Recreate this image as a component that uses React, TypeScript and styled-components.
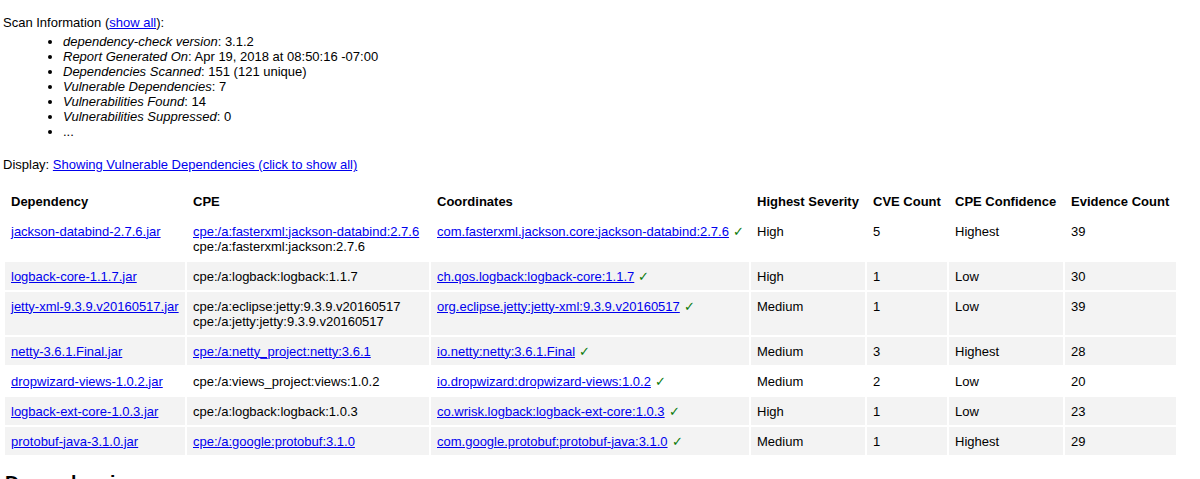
import React from "react";
import styled, { createGlobalStyle } from "styled-components";

const GlobalStyle = createGlobalStyle`
  html, body { margin: 0; padding: 0; background: #fff; }
  body {
    padding: 15px 3px 0 3px;
    font-family: "Liberation Sans", Arial, Helvetica, sans-serif;
    font-size: 13px;
    color: #000;
    overflow: hidden;
  }
`;

const Link = styled.a`
  color: #0000ee;
  text-decoration: underline;
  cursor: pointer;
`;

const Section = styled.div`
  line-height: 15px;
`;

const InfoList = styled.ul`
  margin: 4px 0 0 0;
  padding-left: 60px;
  list-style: disc;
`;

const InfoItem = styled.li`
  line-height: 15px;
`;

const Label = styled.em`
  font-style: italic;
`;

const DisplayLine = styled.div`
  margin-top: 18px;
  line-height: 15px;
`;

const Table = styled.table`
  margin-top: 13px;
  width: 1175px;
  border-spacing: 2px;
  table-layout: fixed;
`;

const Th = styled.th<{ $w: number }>`
  box-sizing: border-box;
  width: ${(p) => p.$w}px;
  padding: 6.5px 6px;
  text-align: left;
  font-weight: bold;
  line-height: 15px;
  vertical-align: top;
  white-space: nowrap;
`;

const Tr = styled.tr<{ $shade: boolean }>`
  background: ${(p) => (p.$shade ? "#f3f3f3" : "transparent")};
`;

const Td = styled.td`
  padding: 6.5px 6px;
  line-height: 15px;
  vertical-align: top;
  white-space: nowrap;
`;

const Check = styled.span`
  color: #0b7a0b;
  margin-left: 4px;
`;

const Heading = styled.h2`
  margin: 15px 0 0 2px;
  font-size: 19.5px;
  font-weight: bold;
`;

type Row = {
  dep: string;
  cpes: { text: string; link: boolean }[];
  coord: string;
  sev: string;
  cve: number;
  conf: string;
  ev: number;
  shade: boolean;
};

const rows: Row[] = [
  {
    dep: "jackson-databind-2.7.6.jar",
    cpes: [
      { text: "cpe:/a:fasterxml:jackson-databind:2.7.6", link: true },
      { text: "cpe:/a:fasterxml:jackson:2.7.6", link: false },
    ],
    coord: "com.fasterxml.jackson.core:jackson-databind:2.7.6",
    sev: "High",
    cve: 5,
    conf: "Highest",
    ev: 39,
    shade: false,
  },
  {
    dep: "logback-core-1.1.7.jar",
    cpes: [{ text: "cpe:/a:logback:logback:1.1.7", link: false }],
    coord: "ch.qos.logback:logback-core:1.1.7",
    sev: "High",
    cve: 1,
    conf: "Low",
    ev: 30,
    shade: true,
  },
  {
    dep: "jetty-xml-9.3.9.v20160517.jar",
    cpes: [
      { text: "cpe:/a:eclipse:jetty:9.3.9.v20160517", link: false },
      { text: "cpe:/a:jetty:jetty:9.3.9.v20160517", link: false },
    ],
    coord: "org.eclipse.jetty:jetty-xml:9.3.9.v20160517",
    sev: "Medium",
    cve: 1,
    conf: "Low",
    ev: 39,
    shade: true,
  },
  {
    dep: "netty-3.6.1.Final.jar",
    cpes: [{ text: "cpe:/a:netty_project:netty:3.6.1", link: true }],
    coord: "io.netty:netty:3.6.1.Final",
    sev: "Medium",
    cve: 3,
    conf: "Highest",
    ev: 28,
    shade: true,
  },
  {
    dep: "dropwizard-views-1.0.2.jar",
    cpes: [{ text: "cpe:/a:views_project:views:1.0.2", link: false }],
    coord: "io.dropwizard:dropwizard-views:1.0.2",
    sev: "Medium",
    cve: 2,
    conf: "Low",
    ev: 20,
    shade: false,
  },
  {
    dep: "logback-ext-core-1.0.3.jar",
    cpes: [{ text: "cpe:/a:logback:logback:1.0.3", link: false }],
    coord: "co.wrisk.logback:logback-ext-core:1.0.3",
    sev: "High",
    cve: 1,
    conf: "Low",
    ev: 23,
    shade: true,
  },
  {
    dep: "protobuf-java-3.1.0.jar",
    cpes: [{ text: "cpe:/a:google:protobuf:3.1.0", link: true }],
    coord: "com.google.protobuf:protobuf-java:3.1.0",
    sev: "Medium",
    cve: 1,
    conf: "Highest",
    ev: 29,
    shade: true,
  },
];

const columns: { label: string; w: number }[] = [
  { label: "Dependency", w: 180 },
  { label: "CPE", w: 242 },
  { label: "Coordinates", w: 318 },
  { label: "Highest Severity", w: 114 },
  { label: "CVE Count", w: 80 },
  { label: "CPE Confidence", w: 114 },
  { label: "Evidence Count", w: 111 },
];

const info: [string, string][] = [
  ["dependency-check version", "3.1.2"],
  ["Report Generated On", "Apr 19, 2018 at 08:50:16 -07:00"],
  ["Dependencies Scanned", "151 (121 unique)"],
  ["Vulnerable Dependencies", "7"],
  ["Vulnerabilities Found", "14"],
  ["Vulnerabilities Suppressed", "0"],
];

export default function App() {
  return (
    <>
      <GlobalStyle />
      <Section>
        Scan Information (<Link>show all</Link>):
        <InfoList>
          {info.map(([k, v]) => (
            <InfoItem key={k}>
              <Label>{k}</Label>: {v}
            </InfoItem>
          ))}
          <InfoItem>...</InfoItem>
        </InfoList>
      </Section>
      <DisplayLine>
        Display: <Link>Showing Vulnerable Dependencies (click to show all)</Link>
      </DisplayLine>
      <Table>
        <thead>
          <tr>
            {columns.map((c) => (
              <Th key={c.label} $w={c.w}>
                {c.label}
              </Th>
            ))}
          </tr>
        </thead>
        <tbody>
          {rows.map((r) => (
            <Tr key={r.dep} $shade={r.shade}>
              <Td>
                <Link>{r.dep}</Link>
              </Td>
              <Td>
                {r.cpes.map((c, i) => (
                  <div key={i}>{c.link ? <Link>{c.text}</Link> : c.text}</div>
                ))}
              </Td>
              <Td>
                <Link>{r.coord}</Link>
                <Check>✓</Check>
              </Td>
              <Td>{r.sev}</Td>
              <Td>{r.cve}</Td>
              <Td>{r.conf}</Td>
              <Td>{r.ev}</Td>
            </Tr>
          ))}
        </tbody>
      </Table>
      <Heading>Dependencies</Heading>
    </>
  );
}
